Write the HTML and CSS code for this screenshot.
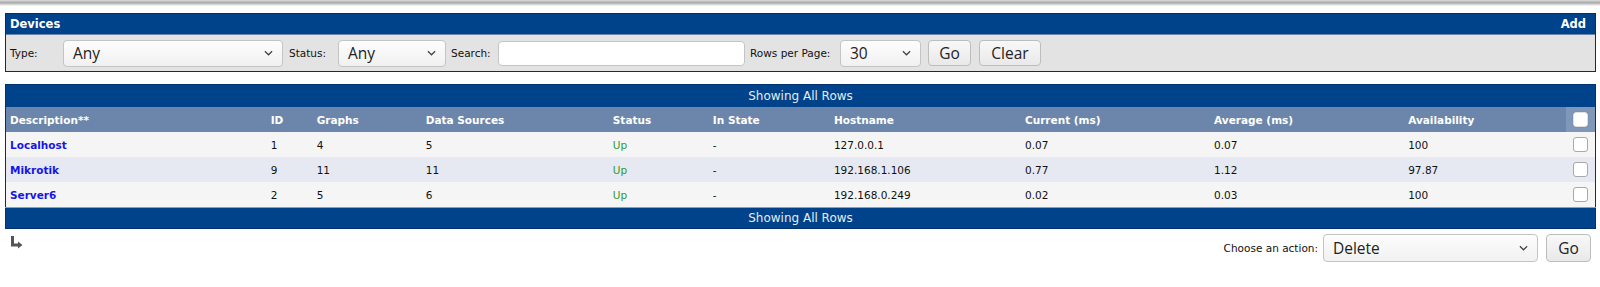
FILE: index.html
```html
<!DOCTYPE html>
<html>
<head>
<meta charset="utf-8">
<link rel="stylesheet" href="styles.css">
</head>
<body>
<div class="topshadow"></div>
<div class="wrap">
  <div class="panel">
    <div class="panel-head">
      <span>Devices</span>
      <span>Add</span>
    </div>
    <div class="filter">
      <span class="lbl lbl-type">Type:</span>
      <div class="sel sel-type"><span>Any</span><svg class="chev" viewBox="0 0 10 6"><path d="M1 1 L5 5 L9 1" fill="none" stroke="#444" stroke-width="1.4"/></svg></div>
      <span class="lbl lbl-status">Status:</span>
      <div class="sel sel-status"><span>Any</span><svg class="chev" viewBox="0 0 10 6"><path d="M1 1 L5 5 L9 1" fill="none" stroke="#444" stroke-width="1.4"/></svg></div>
      <span class="lbl lbl-search">Search:</span>
      <div class="txt"></div>
      <span class="lbl lbl-rows">Rows per Page:</span>
      <div class="sel sel-rows"><span>30</span><svg class="chev" viewBox="0 0 10 6"><path d="M1 1 L5 5 L9 1" fill="none" stroke="#444" stroke-width="1.4"/></svg></div>
      <div class="btn btn-go">Go</div>
      <div class="btn btn-clear">Clear</div>
    </div>
  </div>

  <table class="grid">
    <colgroup>
      <col class="c-desc"><col class="c-id"><col class="c-graphs"><col class="c-ds"><col class="c-status"><col class="c-state"><col class="c-host"><col class="c-cur"><col class="c-avg"><col class="c-avail"><col class="c-chk">
    </colgroup>
    <thead>
      <tr class="nav"><th colspan="11">Showing All Rows</th></tr>
      <tr class="cols">
        <th>Description**</th>
        <th>ID</th>
        <th>Graphs</th>
        <th>Data Sources</th>
        <th>Status</th>
        <th>In State</th>
        <th>Hostname</th>
        <th>Current (ms)</th>
        <th>Average (ms)</th>
        <th>Availability</th>
        <th class="chk chk-head"><span class="cb cb-head"></span></th>
      </tr>
    </thead>
    <tbody>
      <tr class="odd">
        <td><a class="dev">Localhost</a></td><td>1</td><td>4</td><td>5</td><td class="up">Up</td><td>-</td><td>127.0.0.1</td><td>0.07</td><td>0.07</td><td>100</td><td class="chk"><span class="cb"></span></td>
      </tr>
      <tr class="even">
        <td><a class="dev">Mikrotik</a></td><td>9</td><td>11</td><td>11</td><td class="up">Up</td><td>-</td><td>192.168.1.106</td><td>0.77</td><td>1.12</td><td>97.87</td><td class="chk"><span class="cb"></span></td>
      </tr>
      <tr class="odd">
        <td><a class="dev">Server6</a></td><td>2</td><td>5</td><td>6</td><td class="up">Up</td><td>-</td><td>192.168.0.249</td><td>0.02</td><td>0.03</td><td>100</td><td class="chk"><span class="cb"></span></td>
      </tr>
    </tbody>
    <tfoot>
      <tr class="nav foot"><th colspan="11">Showing All Rows</th></tr>
    </tfoot>
  </table>

  <div class="actions">
    <svg class="arrow" width="14" height="14" viewBox="0 0 14 14"><path d="M2.5 1 V10 H9" fill="none" stroke="#555" stroke-width="3"/><path d="M8 6.5 L12.5 10 L8 13.5 Z" fill="#555"/></svg>
    <div class="act-right">
      <span class="lbl">Choose an action:</span>
      <div class="sel sel-action"><span>Delete</span><svg class="chev" viewBox="0 0 10 6"><path d="M1 1 L5 5 L9 1" fill="none" stroke="#444" stroke-width="1.4"/></svg></div>
      <div class="btn btn-go2">Go</div>
    </div>
  </div>
</div>
</body>
</html>
```

FILE: styles.css
```css
html, body {
  margin: 0;
  padding: 0;
  background: #fff;
  font-family: "DejaVu Sans", Verdana, sans-serif;
  font-size: 11px;
  color: #000;
}

.topshadow {
  height: 6px;
  background: linear-gradient(to bottom, #dcdcdc 0%, #a9a9a9 45%, #d6d6d6 75%, #ffffff 100%);
}

.wrap {
  margin: 7px 4px 0 5px;
}

.panel {
  border: 1px solid #002f6c;
  background: #e3e3e3;
}

.panel-head {
  background: #00438a;
  color: #fff;
  font-weight: bold;
  font-size: 11.5px;
  height: 20px;
  line-height: 20px;
  padding: 0 9px 0 4px;
  display: flex;
  justify-content: space-between;
  border-bottom: 1px solid #6c86ab;
}

.filter {
  display: flex;
  align-items: center;
  height: 36px;
  padding-left: 4px;
}

.lbl {
  font-size: 10.5px;
  color: #111;
  white-space: nowrap;
}
.lbl-type { width: 53px; }
.lbl-status { width: 49px; margin-left: 6px; }
.lbl-search { width: 47px; margin-left: 5px; }
.lbl-rows { width: 90px; margin-left: 5px; }

.sel {
  box-sizing: border-box;
  height: 27px;
  border: 1px solid #c4c4c4;
  border-radius: 4px;
  background: linear-gradient(#fdfdfd, #f1f1f1);
  display: flex;
  align-items: center;
  justify-content: space-between;
  padding: 0 9px 0 9px;
  font-family: "Open Sans", "Noto Sans", sans-serif;
  font-size: 15.5px;
  color: #222;
}
.chev { width: 9px; height: 6px; }
.sel-type { width: 220px; }
.sel-status { width: 108px; }
.sel-rows { width: 81px; }
.sel-action { width: 215px; height: 28px; }

.txt {
  box-sizing: border-box;
  width: 247px;
  height: 25px;
  border: 1px solid #c4c4c4;
  border-radius: 4px;
  background: #fff;
}

.btn {
  box-sizing: border-box;
  height: 26px;
  border: 1px solid #bdbdbd;
  border-radius: 4px;
  background: linear-gradient(#f8f8f8, #e9e9e9);
  display: flex;
  align-items: center;
  justify-content: center;
  font-family: "Open Sans", "Noto Sans", sans-serif;
  font-size: 15.5px;
  color: #222;
}
.btn-go { width: 43px; margin-left: 7px; }
.btn-clear { width: 62px; margin-left: 8px; }
.btn-go2 { width: 45px; height: 28px; margin-left: 8px; }

.grid {
  margin-top: 12px;
  width: 100%;
  border-collapse: collapse;
  table-layout: fixed;
  border: 1px solid #00336e;
}
.grid th, .grid td {
  padding: 0 0 0 4px;
  text-align: left;
  white-space: nowrap;
  overflow: hidden;
}
.nav th {
  background: #00438a;
  color: #e6ecf4;
  font-weight: normal;
  font-size: 12px;
  text-align: center;
  height: 22px;
  padding: 0;
}
.nav.foot th { height: 20px; border-top: 1px solid #8ba0bf; }

.cols th {
  background: #6c86ab;
  color: #fff;
  font-weight: bold;
  font-size: 10.5px;
  height: 25px;
}
col.c-desc { width: 261px; }
col.c-id { width: 46px; }
col.c-graphs { width: 109px; }
col.c-ds { width: 187px; }
col.c-status { width: 100px; }
col.c-state { width: 121px; }
col.c-host { width: 191px; }
col.c-cur { width: 189px; }
col.c-avg { width: 194px; }
col.c-avail { width: 162px; }
col.c-chk { width: 29px; }
.grid .chk { padding: 0; text-align: center; }
.cols th.chk-head { background: #7f97b8; }

.grid td {
  height: 25px;
  font-size: 10.5px;
  color: #111;
}
tr.odd td { background: #f5f5f5; }
tr.even td { background: #e6e9f1; }

.dev {
  color: #1515e8;
  font-weight: bold;
  text-decoration: none;
}
.grid td.up { color: #2f9a2f; }

.cb {
  display: inline-block;
  box-sizing: border-box;
  width: 15px;
  height: 15px;
  border: 1px solid #a9a9a9;
  border-radius: 3px;
  background: #fff;
  vertical-align: middle;
}
.cb-head {
  border-color: #e0e0e0;
  box-shadow: 0 0 1px rgba(0,0,0,0.3);
}

.actions {
  display: flex;
  justify-content: space-between;
  align-items: flex-start;
  padding: 5px 5px 0 5px;
}
.arrow { margin-top: 1px; }
.act-right {
  display: flex;
  align-items: center;
}
.act-right .lbl { margin-right: 5px; }
```
